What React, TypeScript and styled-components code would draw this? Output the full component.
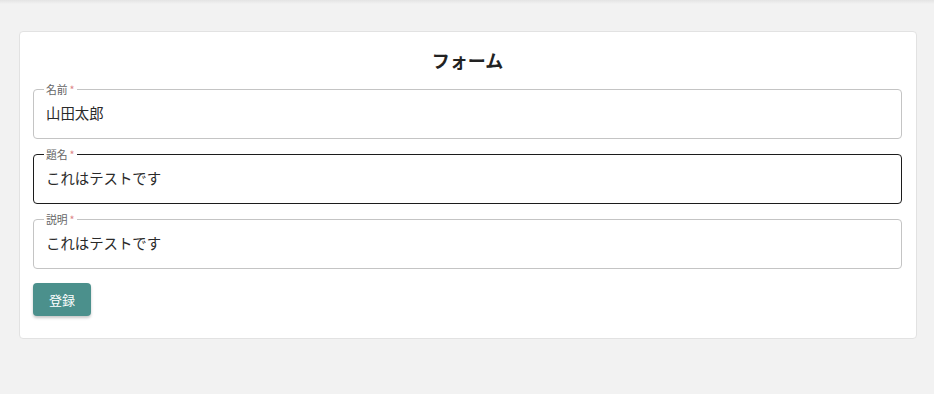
import React from "react";
import styled, { createGlobalStyle } from "styled-components";

const GlobalStyle = createGlobalStyle`
  html, body {
    margin: 0;
    padding: 0;
    background: #f2f2f2;
    font-family: "Noto Sans CJK JP", "Noto Sans", sans-serif;
  }
`;

interface FieldProps {
  $focused?: boolean;
}

const TopShade = styled.div`
  height: 4px;
  background: linear-gradient(#e4e4e4, #f2f2f2);
`;

const Card = styled.form`
  margin: 27px 17px 0 19px;
  padding: 16px 14px 22px 13px;
  background: #fff;
  border: 1px solid #e2e2e2;
  border-radius: 4px;
  display: flex;
  flex-direction: column;
`;

const Title = styled.h1`
  margin: 0 0 11px;
  height: 24px;
  line-height: 24px;
  font-size: 18px;
  font-weight: 700;
  color: #222;
  text-align: center;
`;

const Fields = styled.div`
  display: flex;
  flex-direction: column;
  gap: 9px;
`;

const Field = styled.fieldset<FieldProps>`
  display: block;
  margin: 0;
  padding: 0 12px;
  border: 1px solid ${(props) => (props.$focused ? "#1c1c1c" : "#c4c4c4")};
  border-radius: 4px;
`;

const Legend = styled.legend`
  margin-left: -2px;
  padding: 0 2px;
  height: 12px;
  font-size: 10.8px;
  line-height: 12px;
  color: #666;
`;

const Required = styled.span`
  color: #d88;
  margin-left: 2px;
`;

const Input = styled.input`
  display: block;
  border: none;
  outline: none;
  width: 100%;
  height: 20px;
  padding: 0;
  margin: 7px 0 16px;
  font-family: inherit;
  font-size: 14.4px;
  color: #2a2a2a;
  background: transparent;
`;

const Submit = styled.button`
  margin-top: 14px;
  align-self: flex-start;
  width: 58px;
  height: 33px;
  border: none;
  border-radius: 4px;
  background: #4b908c;
  color: #fff;
  font-family: inherit;
  font-size: 13px;
  box-shadow: 0 2px 3px rgba(0, 0, 0, 0.22);
  cursor: pointer;
`;

const fields = [
  { label: "名前", value: "山田太郎" },
  { label: "題名", value: "これはテストです", focused: true },
  { label: "説明", value: "これはテストです" },
];

const App = () => {
  return (
    <>
      <GlobalStyle />
      <TopShade />
      <Card onSubmit={(e) => e.preventDefault()}>
        <Title>フォーム</Title>
        <Fields>
          {fields.map((el) => (
            <Field key={el.label} $focused={el.focused}>
              <Legend>
                {el.label}
                <Required>*</Required>
              </Legend>
              <Input defaultValue={el.value} />
            </Field>
          ))}
        </Fields>
        <Submit type="submit">登録</Submit>
      </Card>
    </>
  );
};

export default App;
